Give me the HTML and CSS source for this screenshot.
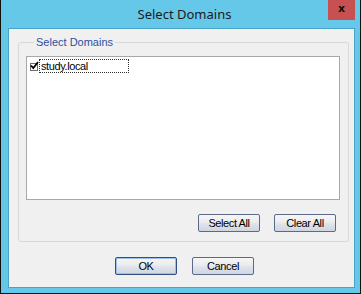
FILE: index.html
```html
<!DOCTYPE html>
<html>
<head>
<meta charset="utf-8">
<link rel="stylesheet" href="styles.css">
</head>
<body>
<div class="window">
  <div class="titlebar">
    <div class="title">Select Domains</div>
    <div class="close">x</div>
  </div>
  <div class="client">
    <fieldset class="group">
      <legend>Select Domains</legend>
      <div class="listbox">
        <div class="item">
          <span class="check"><svg width="9" height="9" viewBox="0 0 9 9"><path d="M1 4.5 L3.3 7 L8 1" fill="none" stroke="#000" stroke-width="1.8"/></svg></span>
          <span class="label">study.local</span>
        </div>
      </div>
      <div class="grouprow">
        <button class="btn">Select All</button>
        <button class="btn">Clear All</button>
      </div>
    </fieldset>
    <div class="footer">
      <button class="btn default">OK</button>
      <button class="btn">Cancel</button>
    </div>
  </div>
</div>
</body>
</html>
```
FILE: styles.css
```css
html, body {
  margin: 0;
  padding: 0;
  background: #ffffff;
}
.window {
  width: 361px;
  height: 294px;
  box-sizing: border-box;
  background: #66c8e8;
  border-left: 1px solid #111;
  border-right: 1px solid #111;
  border-bottom: 1px solid #111;
  padding: 0 5px 5px 7px;
  display: flex;
  flex-direction: column;
  font-family: "Liberation Sans", Arial, sans-serif;
}
.titlebar {
  height: 28px;
  flex: 0 0 28px;
  display: flex;
  align-items: flex-start;
  position: relative;
}
.title {
  flex: 1;
  text-align: center;
  font-family: "Noto Sans", "Open Sans", sans-serif;
  font-size: 13px;
  line-height: 28px;
  color: #1a1a1a;
  padding-left: 6px;
}
.close {
  position: absolute;
  right: 0;
  top: 0;
  width: 27px;
  height: 20px;
  background: #c75050;
  color: #111;
  font-family: "DejaVu Sans", sans-serif;
  font-weight: bold;
  font-size: 11px;
  line-height: 17px;
  text-align: center;
}
.client {
  flex: 1;
  background: #f0f0f0;
  border: 1px solid #4aa3c4;
  display: flex;
  flex-direction: column;
}
.group {
  margin: 7px 5px 0 9px;
  padding: 7px 8px 10px 7px;
  border: 1px solid #d5d9dd;
  border-radius: 3px;
  height: 206px;
  box-sizing: border-box;
  display: flex;
  flex-direction: column;
}
.group legend {
  font-size: 11px;
  line-height: 13px;
  color: #2d4f9e;
  padding: 0 2px;
  margin-left: 8px;
}
.listbox {
  height: 144px;
  box-sizing: border-box;
  background: #fff;
  border: 1px solid #a8a8a8;
  padding: 2px 3px;
}
.item {
  display: flex;
  align-items: center;
  height: 14px;
}
.check {
  width: 8px;
  height: 8px;
  border: 1px solid #6d6d6d;
  box-sizing: border-box;
  background: #fff;
  position: relative;
  margin-right: 1px;
  margin-top: 2px;
}
.check svg {
  position: absolute;
  left: -1px;
  top: -3px;
}
.label {
  font-size: 11px;
  letter-spacing: -0.4px;
  line-height: 12px;
  border: 1px dotted #333;
  width: 90px;
  box-sizing: border-box;
  padding-left: 1px;
  color: #000;
}
.grouprow {
  display: flex;
  justify-content: flex-end;
  gap: 14px;
  margin-top: 14px;
  padding-right: 4px;
}
.btn {
  width: 62px;
  height: 18px;
  box-sizing: border-box;
  border: 1px solid #5a6a88;
  border-radius: 2px;
  background: linear-gradient(#f6f6f6 0%, #ececec 45%, #dfe3ea 55%, #cfd6e2 100%);
  font-family: "Liberation Sans", Arial, sans-serif;
  font-size: 11px;
  letter-spacing: -0.4px;
  color: #000;
  padding: 0;
  line-height: 16px;
}
.btn.default {
  border-color: #2f4f86;
  box-shadow: inset 0 0 0 1px #9cc0ea;
}
.footer {
  display: flex;
  justify-content: center;
  gap: 15px;
  margin-top: 15px;
  padding-left: 6px;
}
```
